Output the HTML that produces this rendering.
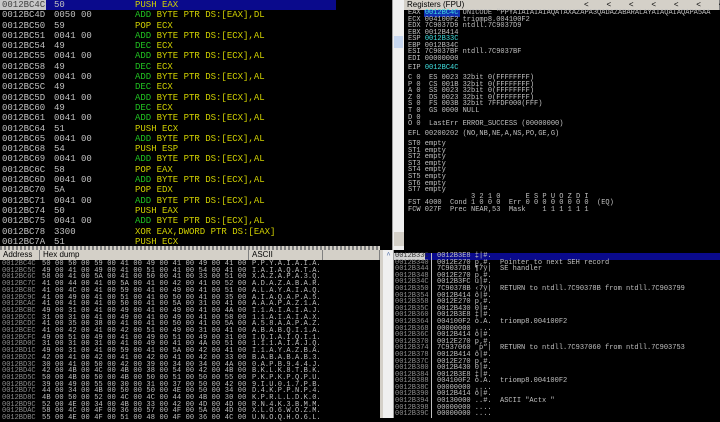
<!DOCTYPE html>
<html><head><meta charset="utf-8"><style>
*{margin:0;padding:0;box-sizing:border-box}
body{width:720px;height:418px;background:#000;overflow:hidden;position:relative;font-family:"Liberation Mono",monospace;color:#c0c0c0}
pre{position:absolute;font-family:"Liberation Mono",monospace;white-space:pre;margin:0}
.d{font-size:9px;line-height:10.3px}
.s{font-size:7px;line-height:6.7px}
.g{color:#20c020}.y{color:#d0d000}
.bar{position:absolute;background:#d4d0c8}
.hdr{position:absolute;background:#d4d0c8;color:#000;font-family:"Liberation Sans",sans-serif;font-size:8px;line-height:10px;padding-left:3px;border-right:1px solid #808080}
</style></head><body>
<!-- disasm highlight -->
<div style="position:absolute;left:0;top:0;width:46px;height:10px;background:#c8c8c8"></div>
<div style="position:absolute;left:46px;top:0;width:290px;height:10px;background:#0a0a8c"></div>
<pre class="d" style="left:2px;top:0;color:#c0c0c0"><span style="color:#404040">0012BC4C</span>
0012BC4D
0012BC50
0012BC51
0012BC54
0012BC55
0012BC58
0012BC59
0012BC5C
0012BC5D
0012BC60
0012BC61
0012BC64
0012BC65
0012BC68
0012BC69
0012BC6C
0012BC6D
0012BC70
0012BC71
0012BC74
0012BC75
0012BC78
0012BC7A</pre>
<pre class="d" style="left:54px;top:0;color:#c0c0c0">50
0050 00
59
0041 00
49
0041 00
49
0041 00
49
0041 00
49
0041 00
51
0041 00
54
0041 00
58
0041 00
5A
0041 00
50
0041 00
3300
51</pre>
<pre class="d y" style="left:135px;top:0">PUSH EAX
<span class="g">ADD</span> BYTE PTR DS:[EAX],DL
POP ECX
<span class="g">ADD</span> BYTE PTR DS:[ECX],AL
<span class="g">DEC</span> ECX
<span class="g">ADD</span> BYTE PTR DS:[ECX],AL
<span class="g">DEC</span> ECX
<span class="g">ADD</span> BYTE PTR DS:[ECX],AL
<span class="g">DEC</span> ECX
<span class="g">ADD</span> BYTE PTR DS:[ECX],AL
<span class="g">DEC</span> ECX
<span class="g">ADD</span> BYTE PTR DS:[ECX],AL
PUSH ECX
<span class="g">ADD</span> BYTE PTR DS:[ECX],AL
PUSH ESP
<span class="g">ADD</span> BYTE PTR DS:[ECX],AL
POP EAX
<span class="g">ADD</span> BYTE PTR DS:[ECX],AL
POP EDX
<span class="g">ADD</span> BYTE PTR DS:[ECX],AL
PUSH EAX
<span class="g">ADD</span> BYTE PTR DS:[ECX],AL
XOR EAX,DWORD PTR DS:[EAX]
PUSH ECX</pre>
<!-- disasm scrollbar -->
<div class="bar" style="left:392px;top:0;width:12px;height:250px;background:#f0f0f0;border-left:1px solid #a0a0a0"></div>
<div style="position:absolute;left:394px;top:36px;width:9px;height:12px;background:#c8d8f0"></div>
<!-- horizontal separator -->
<div style="position:absolute;left:0;top:246px;width:380px;height:4px;background:repeating-linear-gradient(90deg,#808080 0 2px,#d4d0c8 2px 4px)"></div>
<!-- registers -->
<div class="hdr" style="left:404px;top:0;width:316px;height:10px;font-size:8px">Registers (FPU) <span style="position:absolute;left:180px;letter-spacing:0">&lt;&nbsp;&nbsp;&nbsp;&nbsp;&nbsp;&nbsp;&nbsp;&nbsp;&lt;&nbsp;&nbsp;&nbsp;&nbsp;&nbsp;&nbsp;&nbsp;&nbsp;&lt;&nbsp;&nbsp;&nbsp;&nbsp;&nbsp;&nbsp;&nbsp;&nbsp;&lt;&nbsp;&nbsp;&nbsp;&nbsp;&nbsp;&nbsp;&nbsp;&nbsp;&lt;&nbsp;&nbsp;&nbsp;&nbsp;&nbsp;&nbsp;&nbsp;&nbsp;&lt;&nbsp;&nbsp;&nbsp;&nbsp;&nbsp;&nbsp;&nbsp;&nbsp;&lt;</span></div>
<div style="position:absolute;left:424px;top:10px;width:36px;height:7px;background:#1030b0"></div>
<pre class="s" style="left:408px;top:10px;line-height:6.5px">EAX <span style="color:#40e0e0">0012BC4C</span> UNICODE "PPYAIAIAIAIAQATAXAZAPA3QADAZABARALAYAIAQAIAQAPA5AA
ECX 004100F2 triomp8.004100F2
EDX 7C9037D9 ntdll.7C9037D9
EBX 0012B414
ESP <span style="color:#40e0e0">0012B33C</span>
EBP 0012B34C
ESI 7C9037BF ntdll.7C9037BF
EDI 00000000
</pre>
<pre class="s" style="left:408px;top:65px">EIP <span style="color:#40e0e0">0012BC4C</span></pre>
<pre class="s" style="left:408px;top:75px;line-height:6.6px">C 0  ES 0023 32bit 0(FFFFFFFF)
P 0  CS 001B 32bit 0(FFFFFFFF)
A 0  SS 0023 32bit 0(FFFFFFFF)
Z 0  DS 0023 32bit 0(FFFFFFFF)
S 0  FS 003B 32bit 7FFDF000(FFF)
T 0  GS 0000 NULL
D 0
O 0  LastErr ERROR_SUCCESS (00000000)</pre>
<pre class="s" style="left:408px;top:131px">EFL 00200202 (NO,NB,NE,A,NS,PO,GE,G)</pre>
<pre class="s" style="left:408px;top:141px;line-height:6.6px">ST0 empty
ST1 empty
ST2 empty
ST3 empty
ST4 empty
ST5 empty
ST6 empty
ST7 empty
               3 2 1 0      E S P U O Z D I
FST 4000  Cond 1 0 0 0  Err 0 0 0 0 0 0 0 0  (EQ)
FCW 027F  Prec NEAR,53  Mask    1 1 1 1 1 1</pre>
<!-- hex dump -->
<div class="hdr" style="left:0;top:250px;width:40px;height:10px">Address</div>
<div class="hdr" style="left:40px;top:250px;width:209px;height:10px">Hex dump</div>
<div class="hdr" style="left:249px;top:250px;width:74px;height:10px">ASCII</div>
<div class="hdr" style="left:323px;top:250px;width:57px;height:10px"></div>
<pre class="s" style="left:2px;top:261px;color:#909090">0012BC4C
0012BC5C
0012BC6C
0012BC7C
0012BC8C
0012BC9C
0012BCAC
0012BCBC
0012BCCC
0012BCDC
0012BCEC
0012BCFC
0012BD0C
0012BD1C
0012BD2C
0012BD3C
0012BD4C
0012BD5C
0012BD6C
0012BD7C
0012BD8C
0012BD9C
0012BDAC
0012BDBC</pre>
<pre class="s" style="left:42px;top:261px;letter-spacing:0.15px">50 00 50 00 59 00 41 00 49 00 41 00 49 00 41 00
49 00 41 00 49 00 41 00 51 00 41 00 54 00 41 00
58 00 41 00 5A 00 41 00 50 00 41 00 33 00 51 00
41 00 44 00 41 00 5A 00 41 00 42 00 41 00 52 00
41 00 4C 00 41 00 59 00 41 00 49 00 41 00 51 00
41 00 49 00 41 00 51 00 41 00 50 00 41 00 35 00
41 00 41 00 41 00 50 00 41 00 5A 00 31 00 41 00
49 00 31 00 41 00 49 00 41 00 49 00 41 00 4A 00
31 00 31 00 41 00 49 00 41 00 49 00 41 00 58 00
41 00 35 00 38 00 41 00 41 00 50 00 41 00 5A 00
41 00 42 00 41 00 42 00 51 00 49 00 31 00 41 00
49 00 51 00 49 00 41 00 49 00 51 00 49 00 31 00
31 00 31 00 31 00 41 00 49 00 41 00 4A 00 51 00
49 00 31 00 41 00 59 00 41 00 5A 00 42 00 41 00
42 00 41 00 42 00 41 00 42 00 41 00 42 00 33 00
30 00 41 00 50 00 42 00 39 00 34 00 34 00 4A 00
42 00 4B 00 4C 00 4B 00 38 00 54 00 42 00 4B 00
50 00 4B 00 50 00 4B 00 50 00 51 00 50 00 55 00
39 00 49 00 55 00 30 00 31 00 37 00 50 00 42 00
44 00 34 00 4B 00 50 00 50 00 4E 00 50 00 34 00
4B 00 50 00 52 00 4C 00 4C 00 44 00 4B 00 30 00
52 00 4E 00 34 00 4B 00 33 00 42 00 4D 00 4D 00
58 00 4C 00 4F 00 36 00 57 00 4F 00 5A 00 4D 00
55 00 4E 00 4F 00 51 00 48 00 4F 00 36 00 4C 00</pre>
<pre class="s" style="left:252px;top:261px;letter-spacing:0.1px">P.P.Y.A.I.A.I.A.
I.A.I.A.Q.A.T.A.
X.A.Z.A.P.A.3.Q.
A.D.A.Z.A.B.A.R.
A.L.A.Y.A.I.A.Q.
A.I.A.Q.A.P.A.5.
A.A.A.P.A.Z.1.A.
I.1.A.I.A.I.A.J.
1.1.A.I.A.I.A.X.
A.5.8.A.A.P.A.Z.
A.B.A.B.Q.I.1.A.
I.Q.I.A.I.Q.I.1.
1.1.1.A.I.A.J.Q.
I.1.A.Y.A.Z.B.A.
B.A.B.A.B.A.B.3.
0.A.P.B.9.4.4.J.
B.K.L.K.8.T.B.K.
P.K.P.K.P.Q.P.U.
9.I.U.0.1.7.P.B.
D.4.K.P.P.N.P.4.
K.P.R.L.L.D.K.0.
R.N.4.K.3.B.M.M.
X.L.O.6.W.O.Z.M.
U.N.O.Q.H.O.6.L.</pre>
<!-- divider between bottom panes -->
<div style="position:absolute;left:380px;top:250px;width:3px;height:168px;background:#d4d0c8"></div>
<!-- stack scrollbar -->
<div class="bar" style="left:383px;top:250px;width:11px;height:168px;background:#f0f0f0;border-right:1px solid #a0a0a0"></div>
<div style="position:absolute;left:384px;top:252px;width:9px;height:8px;color:#4060a0;font-size:7px;line-height:8px;text-align:center">^</div>
<div style="position:absolute;left:394px;top:232px;width:10px;height:14px;background:#d4d0c8"></div>
<!-- stack -->
<div style="position:absolute;left:394px;top:253px;width:31px;height:7px;background:#d0d0d0"></div>
<div style="position:absolute;left:425px;top:253px;width:295px;height:7px;background:#0a0a8c"></div>
<div style="position:absolute;left:431px;top:253px;width:1px;height:165px;background:#c0c0c0"></div>
<pre class="s" style="left:395px;top:253px;line-height:6.6px;color:#909090"><span style="color:#303030">0012B33C</span>
0012B340
0012B344
0012B348
0012B34C
0012B350
0012B354
0012B358
0012B35C
0012B360
0012B364
0012B368
0012B36C
0012B370
0012B374
0012B378
0012B37C
0012B380
0012B384
0012B388
0012B38C
0012B390
0012B394
0012B398
0012B39C</pre>
<pre class="s" style="left:437px;top:253px;line-height:6.6px">0012B3E8 ‡|#.
0012E270 p‚#.  Pointer to next SEH record
7C9037D8 ¶7ÿ|  SE handler
0012E270 p‚#.
0012B3FC ü|#.
7C90378B ‹7ÿ|  RETURN to ntdll.7C90378B from ntdll.7C903799
0012B414 ô|#.
0012E270 p‚#.
0012B430 0|#.
0012B3E8 ‡|#.
004100F2 ò.A.  triomp8.004100F2
00000000 ....
0012B414 ô|#.
0012E270 p‚#.
7C937060 `p“|  RETURN to ntdll.7C937060 from ntdll.7C903753
0012B414 ô|#.
0012E270 p‚#.
0012B430 0|#.
0012B3E8 ‡|#.
004100F2 ò.A.  triomp8.004100F2
00000000 ....
0012B414 ô|#.
00130000 ..#.  ASCII "Actx "
00000000 ....
00000000 ....</pre>
</body></html>
